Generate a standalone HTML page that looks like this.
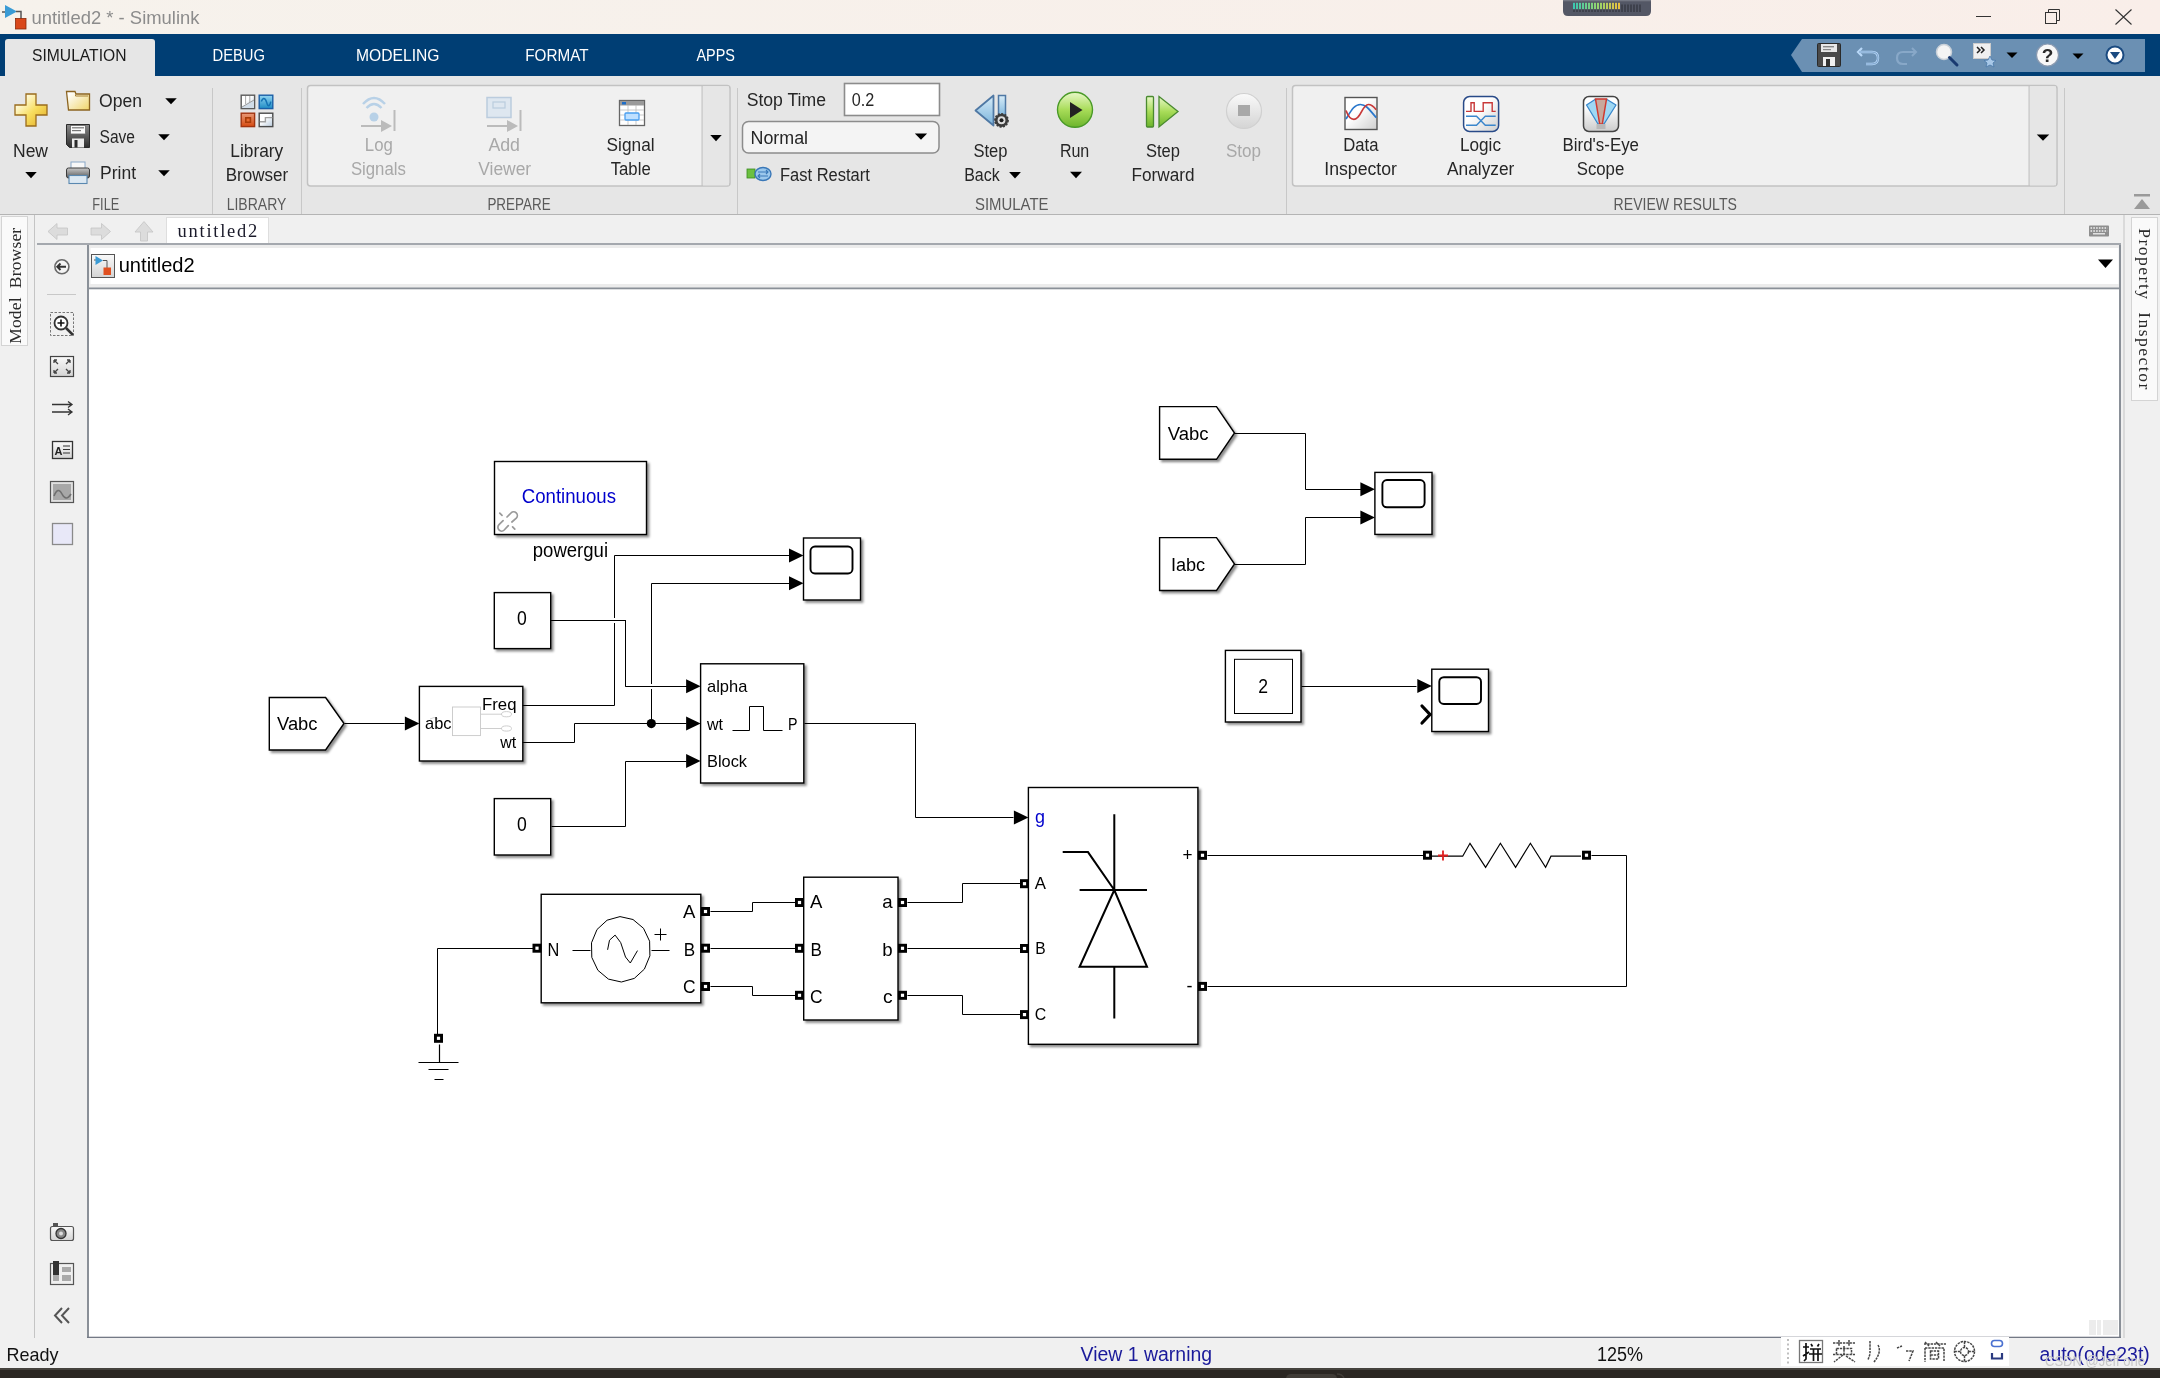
<!DOCTYPE html>
<html><head><meta charset="utf-8"><title>untitled2 * - Simulink</title>
<style>html,body{margin:0;padding:0;width:2160px;height:1378px;overflow:hidden;background:#fff;font-family:"Liberation Sans",sans-serif}svg{display:block;will-change:transform}</style>
</head><body>
<svg width="2160" height="1378" viewBox="0 0 2160 1378">
<defs><linearGradient id="tg" x1="0" y1="0" x2="1" y2="0"><stop offset="0" stop-color="#f6f2ec"/><stop offset="1" stop-color="#f9eee9"/></linearGradient></defs>
<rect x="0" y="0" width="2160" height="34" fill="url(#tg)"/>
<g><path d="M2 12H8" stroke="#555" stroke-width="1.5"/><path d="M5 5L17 11.5L5 18Z" fill="#3a9bd5"/><path d="M16 11.5H21V19" stroke="#555" stroke-width="1.5" fill="none"/><rect x="15.5" y="18.5" width="10.5" height="10.5" fill="#d9481b" stroke="#8a2a0a" stroke-width="0.8"/></g>
<text x="31.5" y="24" font-family="Liberation Sans" font-size="19" fill="#8c8c8c" textLength="168" lengthAdjust="spacingAndGlyphs">untitled2 * - Simulink</text>
<path d="M1563 0H1651V11Q1651 16 1646 16H1568Q1563 16 1563 11Z" fill="#535765"/><rect x="1563" y="0" width="88" height="1.3" fill="#737783"/>
<rect x="1573.0" y="2.8" width="2" height="6.4" fill="#3cc8b0"/>
<rect x="1573.0" y="9.6" width="2" height="2.4" fill="#3e414c"/>
<rect x="1576.0" y="2.8" width="2" height="6.4" fill="#47c9a7"/>
<rect x="1576.0" y="9.6" width="2" height="2.4" fill="#3e414c"/>
<rect x="1579.0" y="2.8" width="2" height="6.4" fill="#52cb9f"/>
<rect x="1579.0" y="9.6" width="2" height="2.4" fill="#3e414c"/>
<rect x="1582.0" y="2.8" width="2" height="6.4" fill="#5dcd97"/>
<rect x="1582.0" y="9.6" width="2" height="2.4" fill="#3e414c"/>
<rect x="1585.0" y="2.8" width="2" height="6.4" fill="#69cf8f"/>
<rect x="1585.0" y="9.6" width="2" height="2.4" fill="#3e414c"/>
<rect x="1588.0" y="2.8" width="2" height="6.4" fill="#74d086"/>
<rect x="1588.0" y="9.6" width="2" height="2.4" fill="#3e414c"/>
<rect x="1591.0" y="2.8" width="2" height="6.4" fill="#7fd27e"/>
<rect x="1591.0" y="9.6" width="2" height="2.4" fill="#3e414c"/>
<rect x="1594.0" y="2.8" width="2" height="6.4" fill="#8ad476"/>
<rect x="1594.0" y="9.6" width="2" height="2.4" fill="#3e414c"/>
<rect x="1597.0" y="2.8" width="2" height="6.4" fill="#96d66e"/>
<rect x="1597.0" y="9.6" width="2" height="2.4" fill="#3e414c"/>
<rect x="1600.0" y="2.8" width="2" height="6.4" fill="#a1d267"/>
<rect x="1600.0" y="9.6" width="2" height="2.4" fill="#3e414c"/>
<rect x="1603.0" y="2.8" width="2" height="6.4" fill="#adcf60"/>
<rect x="1603.0" y="9.6" width="2" height="2.4" fill="#3e414c"/>
<rect x="1606.0" y="2.8" width="2" height="6.4" fill="#b9cc5a"/>
<rect x="1606.0" y="9.6" width="2" height="2.4" fill="#3e414c"/>
<rect x="1609.0" y="2.8" width="2" height="6.4" fill="#c4c953"/>
<rect x="1609.0" y="9.6" width="2" height="2.4" fill="#3e414c"/>
<rect x="1612.0" y="2.8" width="2" height="6.4" fill="#d0c64d"/>
<rect x="1612.0" y="9.6" width="2" height="2.4" fill="#3e414c"/>
<rect x="1615.0" y="2.8" width="2" height="6.4" fill="#dcc346"/>
<rect x="1615.0" y="9.6" width="2" height="2.4" fill="#3e414c"/>
<rect x="1618.0" y="2.8" width="2" height="6.4" fill="#e8c040"/>
<rect x="1618.0" y="9.6" width="2" height="2.4" fill="#3e414c"/>
<rect x="1621.0" y="4.5" width="2" height="7.5" fill="#3e414c"/>
<rect x="1624.0" y="4.5" width="2" height="7.5" fill="#3e414c"/>
<rect x="1627.0" y="4.5" width="2" height="7.5" fill="#3e414c"/>
<rect x="1630.0" y="4.5" width="2" height="7.5" fill="#3e414c"/>
<rect x="1633.0" y="4.5" width="2" height="7.5" fill="#3e414c"/>
<rect x="1636.0" y="4.5" width="2" height="7.5" fill="#3e414c"/>
<rect x="1639.0" y="4.5" width="2" height="7.5" fill="#3e414c"/>
<path d="M1976 16.5H1991" stroke="#333" stroke-width="1" fill="none"/>
<rect x="2045.5" y="12.5" width="11" height="11" fill="none" stroke="#333" stroke-width="1"/><path d="M2048.5 12.5V9.5H2059.5V20.5H2056.5" fill="none" stroke="#333" stroke-width="1"/>
<path d="M2115.5 9.5L2131.5 24.5M2131.5 9.5L2115.5 24.5" stroke="#333" stroke-width="1.1" fill="none"/>
<rect x="0" y="34" width="2160" height="42" fill="#003e74"/>
<path d="M5 76V42Q5 39 8 39H152Q155 39 155 42V76Z" fill="#e6e6e6"/>
<text x="32" y="61.3" font-family="Liberation Sans" font-size="17" fill="#1a1a1a" textLength="94.5" lengthAdjust="spacingAndGlyphs">SIMULATION</text>
<text x="212.5" y="61.3" font-family="Liberation Sans" font-size="17" fill="#ffffff" textLength="52.5" lengthAdjust="spacingAndGlyphs">DEBUG</text>
<text x="356" y="61.3" font-family="Liberation Sans" font-size="17" fill="#ffffff" textLength="83.5" lengthAdjust="spacingAndGlyphs">MODELING</text>
<text x="525.3" y="61.3" font-family="Liberation Sans" font-size="17" fill="#ffffff" textLength="63.2" lengthAdjust="spacingAndGlyphs">FORMAT</text>
<text x="696.5" y="61.3" font-family="Liberation Sans" font-size="17" fill="#ffffff" textLength="38.5" lengthAdjust="spacingAndGlyphs">APPS</text>
<path d="M1791 55L1802 39H2145V72H1802Z" fill="#6b90b3"/>
<rect x="0" y="76" width="2160" height="138" fill="#e6e6e6"/>
<rect x="0" y="214" width="2160" height="1" fill="#b4b4b4"/>
<rect x="212.0" y="88" width="1" height="126" fill="#c8c8c8"/>
<rect x="301.0" y="88" width="1" height="126" fill="#c8c8c8"/>
<rect x="737.0" y="88" width="1" height="126" fill="#c8c8c8"/>
<rect x="1286.0" y="88" width="1" height="126" fill="#c8c8c8"/>
<rect x="2064.0" y="88" width="1" height="126" fill="#c8c8c8"/>
<defs><linearGradient id="gy" x1="0" y1="0" x2="0" y2="1"><stop offset="0" stop-color="#fff6b0"/><stop offset="0.5" stop-color="#f6d850"/><stop offset="1" stop-color="#e0a820"/></linearGradient><linearGradient id="gf" x1="0" y1="0" x2="1" y2="1"><stop offset="0" stop-color="#fffce8"/><stop offset="1" stop-color="#e8c878"/></linearGradient><linearGradient id="gg" x1="0" y1="0" x2="0" y2="1"><stop offset="0" stop-color="#e8f8c8"/><stop offset="0.5" stop-color="#a8dc58"/><stop offset="1" stop-color="#6cb42c"/></linearGradient><linearGradient id="gs" x1="0" y1="0" x2="0" y2="1"><stop offset="0" stop-color="#fafafa"/><stop offset="1" stop-color="#d4d4d4"/></linearGradient><linearGradient id="gb" x1="0" y1="0" x2="0" y2="1"><stop offset="0" stop-color="#d8ecf8"/><stop offset="1" stop-color="#7ab4dc"/></linearGradient><filter id="sh" x="-10%" y="-10%" width="130%" height="130%"><feDropShadow dx="2.2" dy="2.2" stdDeviation="1.3" flood-color="#000" flood-opacity="0.45"/></filter></defs>
<defs><linearGradient id="gy2" x1="0" y1="0" x2="1" y2="1"><stop offset="0.15" stop-color="#fffef0"/><stop offset="0.55" stop-color="#f8de60"/><stop offset="1" stop-color="#e0a820"/></linearGradient><linearGradient id="gfo" x1="0" y1="0" x2="1" y2="1"><stop offset="0.1" stop-color="#ffffff"/><stop offset="1" stop-color="#f0d468"/></linearGradient><linearGradient id="gfl" x1="0" y1="0" x2="0" y2="1"><stop offset="0" stop-color="#8a8a8a"/><stop offset="1" stop-color="#2e2e2e"/></linearGradient><linearGradient id="gpr" x1="0" y1="0" x2="0" y2="1"><stop offset="0" stop-color="#c8c8c8"/><stop offset="1" stop-color="#5a5a5a"/></linearGradient></defs>
<path d="M26 94H36V105H47V115H36V126H26V115H15V105H26Z" fill="url(#gy2)" stroke="#9a6c1c" stroke-width="1.3"/>
<text x="13" y="156.8" font-family="Liberation Sans" font-size="17.5" fill="#262626" textLength="35" lengthAdjust="spacingAndGlyphs">New</text>
<path d="M25.25 172L36.75 172L31 178.2Z" fill="#000"/>
<path d="M66.5 91.5H75L76 94H89.5V110H68.5Z" fill="url(#gfo)" stroke="#8c6420" stroke-width="1.3"/><path d="M75.5 94.5V96H88" stroke="#a88030" stroke-width="1" fill="none"/>
<text x="99" y="106.5" font-family="Liberation Sans" font-size="17.5" fill="#262626" textLength="43" lengthAdjust="spacingAndGlyphs">Open</text>
<path d="M165.25 98.2L176.75 98.2L171 104.2Z" fill="#000"/>
<path d="M66.5 124.5H89.5V147.5H69.5L66.5 144.5Z" fill="url(#gfl)" stroke="#2a2a2a" stroke-width="1"/><rect x="70.5" y="125.5" width="15" height="8.5" fill="#fafafa" stroke="#666" stroke-width="0.8"/><rect x="72" y="127.2" width="12" height="1.2" fill="#777"/><rect x="72" y="130" width="9" height="1.2" fill="#777"/><rect x="72" y="138.5" width="12" height="9" fill="#ececec"/><rect x="74.5" y="140" width="3" height="7.5" fill="#2a2a2a"/>
<text x="99.5" y="142.9" font-family="Liberation Sans" font-size="17.5" fill="#262626" textLength="35.5" lengthAdjust="spacingAndGlyphs">Save</text>
<path d="M158.25 134.2L169.75 134.2L164 140.2Z" fill="#000"/>
<rect x="71" y="162" width="14" height="7" fill="#f8f8f8" stroke="#8aa8c8" stroke-width="1"/><rect x="66.5" y="168" width="23" height="10" rx="2" fill="url(#gpr)" stroke="#3c3c3c" stroke-width="1"/><rect x="69" y="175.5" width="18" height="8" fill="#dce8f2" stroke="#5a88b0" stroke-width="1.1"/>
<text x="100" y="179" font-family="Liberation Sans" font-size="17.5" fill="#262626" textLength="36" lengthAdjust="spacingAndGlyphs">Print</text>
<path d="M158.25 170.3L169.75 170.3L164 176.3Z" fill="#000"/>
<text x="92.3" y="210" font-family="Liberation Sans" font-size="16.5" fill="#5a5a5a" textLength="27" lengthAdjust="spacingAndGlyphs">FILE</text>
<defs><linearGradient id="glb" x1="0" y1="0" x2="0" y2="1"><stop offset="0" stop-color="#90d4f2"/><stop offset="1" stop-color="#1f8cc4"/></linearGradient><linearGradient id="glo" x1="0" y1="0" x2="0" y2="1"><stop offset="0" stop-color="#e89a78"/><stop offset="1" stop-color="#d64a10"/></linearGradient><linearGradient id="glw" x1="0" y1="0" x2="1" y2="1"><stop offset="0.4" stop-color="#ffffff"/><stop offset="1" stop-color="#b8cadc"/></linearGradient></defs>
<rect x="241.2" y="95.2" width="13.4" height="13.4" fill="url(#glw)" stroke="#5a5a5a" stroke-width="1.4"/><path d="M242 107L254 100V108H242Z" fill="#d0dce8"/><path d="M242 107L254 100" stroke="#9a9a9a" stroke-width="1"/><path d="M245.6 96V104M249.8 96V102" stroke="#a8a8a8" stroke-width="1"/><rect x="259.2" y="95.2" width="13.6" height="13.4" fill="url(#glb)" stroke="#1a5ea6" stroke-width="1.4"/><path d="M261.3 101.6Q262.5 98.4 263.8 98.4Q265.5 98.4 266.5 102Q267.5 105.7 268.5 105.7Q270 105.7 270.8 101.6" stroke="#1472b4" stroke-width="1.5" fill="none"/><rect x="241.2" y="113.2" width="13.4" height="13.4" fill="url(#glo)" stroke="#a03410" stroke-width="1.4"/><rect x="245.8" y="117.8" width="4.6" height="4.4" fill="#e86a30" stroke="#a83c08" stroke-width="1.6"/><rect x="259.2" y="113.2" width="13.6" height="13.4" fill="url(#glw)" stroke="#4a4a4a" stroke-width="1.4"/><path d="M259.8 121.8H265.4V117.6H272.4" stroke="#a0a0a0" stroke-width="1.4" fill="none"/>
<text x="230.3" y="156.5" font-family="Liberation Sans" font-size="17.5" fill="#262626" textLength="53" lengthAdjust="spacingAndGlyphs">Library</text>
<text x="225.7" y="180.5" font-family="Liberation Sans" font-size="17.5" fill="#262626" textLength="62.5" lengthAdjust="spacingAndGlyphs">Browser</text>
<text x="226.7" y="210" font-family="Liberation Sans" font-size="16.5" fill="#5a5a5a" textLength="59.7" lengthAdjust="spacingAndGlyphs">LIBRARY</text>
<rect x="307.5" y="85.5" width="422.5" height="100.5" fill="#f0f0f0" stroke="#c2c2c2" stroke-width="1.5" rx="3"/>
<rect x="701.5" y="86" width="1.2" height="100" fill="#c2c2c2"/>
<rect x="703" y="86.3" width="26" height="99" fill="#e6e6e6"/>
<path d="M710.25 135L721.75 135L716 141.2Z" fill="#000"/>
<g opacity="0.55"><path d="M363 104Q374 92 385 104" stroke="#8cb8e0" stroke-width="2.5" fill="none"/><path d="M366.5 108Q374 100 381.5 108" stroke="#8cb8e0" stroke-width="2.5" fill="none"/><circle cx="374" cy="117" r="4.5" fill="#8cb8e0"/><path d="M361 126H382" stroke="#909090" stroke-width="2"/><path d="M381 120L392 126L381 132Z" fill="#909090"/><path d="M394.5 110V131" stroke="#909090" stroke-width="2"/></g>
<text x="364.8" y="151" font-family="Liberation Sans" font-size="17.5" fill="#a8a8a8" textLength="28" lengthAdjust="spacingAndGlyphs">Log</text>
<text x="350.9" y="175" font-family="Liberation Sans" font-size="17.5" fill="#a8a8a8" textLength="55" lengthAdjust="spacingAndGlyphs">Signals</text>
<g opacity="0.55"><rect x="487" y="97.5" width="24" height="20" fill="#d0e0f0" stroke="#90b0d0" stroke-width="1.5"/><rect x="493" y="102" width="12" height="6" fill="none" stroke="#90b0d0" stroke-width="1.2"/><path d="M487 126H508" stroke="#909090" stroke-width="2"/><path d="M507 120L518 126L507 132Z" fill="#909090"/><path d="M520.5 110V131" stroke="#909090" stroke-width="2"/></g>
<text x="488.4" y="151" font-family="Liberation Sans" font-size="17.5" fill="#a8a8a8" textLength="31.6" lengthAdjust="spacingAndGlyphs">Add</text>
<text x="478.2" y="175" font-family="Liberation Sans" font-size="17.5" fill="#a8a8a8" textLength="53" lengthAdjust="spacingAndGlyphs">Viewer</text>
<rect x="619.5" y="100.5" width="25" height="25" fill="#fff" stroke="#666" stroke-width="1.3"/><rect x="620" y="101" width="24" height="4.5" fill="#9a9a9a"/><rect x="622" y="102" width="4" height="2.5" fill="#1e6ec8"/><path d="M620 110H644M620 115H644M620 120H644M628 105V125M636 105V125" stroke="#bbb" stroke-width="0.8"/><rect x="625" y="113" width="14" height="7" rx="1" fill="#bfe0ff" stroke="#4a9ef0" stroke-width="1.3"/>
<text x="606.6" y="151" font-family="Liberation Sans" font-size="17.5" fill="#262626" textLength="48" lengthAdjust="spacingAndGlyphs">Signal</text>
<text x="610.7" y="175" font-family="Liberation Sans" font-size="17.5" fill="#262626" textLength="40" lengthAdjust="spacingAndGlyphs">Table</text>
<text x="487.4" y="209.5" font-family="Liberation Sans" font-size="16.5" fill="#5a5a5a" textLength="63.2" lengthAdjust="spacingAndGlyphs">PREPARE</text>
<text x="746.7" y="105.6" font-family="Liberation Sans" font-size="17.5" fill="#262626" textLength="79.3" lengthAdjust="spacingAndGlyphs">Stop Time</text>
<rect x="844.5" y="83.5" width="95" height="32" fill="#ffffff" stroke="#8c8c8c" stroke-width="1.6"/>
<text x="851.7" y="105.6" font-family="Liberation Sans" font-size="17.5" fill="#262626" textLength="22.5" lengthAdjust="spacingAndGlyphs">0.2</text>
<rect x="742.5" y="121.5" width="196.5" height="31.5" fill="#f4f4f4" stroke="#8c8c8c" stroke-width="1.5" rx="6"/>
<text x="750.5" y="143.7" font-family="Liberation Sans" font-size="17.5" fill="#262626" textLength="57.6" lengthAdjust="spacingAndGlyphs">Normal</text>
<path d="M914.85 133.5L927.15 133.5L921 139.7Z" fill="#000"/>
<rect x="747" y="169" width="8" height="9" fill="#6cc040" stroke="#3a8a20" stroke-width="0.8"/><ellipse cx="763" cy="174" rx="8" ry="6.5" fill="#9cc8ec" stroke="#3a78b8" stroke-width="1.4"/><path d="M758 172H768M766 170L768 172L766 174M768 176H758M760 174L758 176L760 178" stroke="#3a78b8" stroke-width="1.1" fill="none"/>
<text x="780" y="180.7" font-family="Liberation Sans" font-size="17.5" fill="#262626" textLength="89.8" lengthAdjust="spacingAndGlyphs">Fast Restart</text>
<path d="M975.5 110.5L993.5 95.5V125.5Z" fill="url(#gb)" stroke="#4f78a4" stroke-width="1.8" stroke-linejoin="round"/><rect x="998.5" y="95.5" width="7" height="22" fill="url(#gb)" stroke="#4f78a4" stroke-width="1.5"/><circle cx="1001.5" cy="120.3" r="6.6" fill="#3c3c3c" stroke="#3c3c3c" stroke-width="1.6" stroke-dasharray="2 1.4"/><circle cx="1001.5" cy="120.3" r="4.6" fill="#dcdcdc" stroke="#3c3c3c" stroke-width="1.3"/><circle cx="1001.5" cy="120.3" r="2" fill="#1e1e1e"/>
<text x="973.4" y="157" font-family="Liberation Sans" font-size="17.5" fill="#262626" textLength="34" lengthAdjust="spacingAndGlyphs">Step</text>
<text x="964.2" y="180.7" font-family="Liberation Sans" font-size="17.5" fill="#262626" textLength="35.5" lengthAdjust="spacingAndGlyphs">Back</text>
<path d="M1009.1 172L1020.9 172L1015 178.5Z" fill="#000"/>
<circle cx="1075" cy="109.8" r="17.5" fill="url(#gg)" stroke="#4a9a28" stroke-width="1.4"/><path d="M1070 102L1082.5 110L1070 118Z" fill="#222"/>
<text x="1059.9" y="156.9" font-family="Liberation Sans" font-size="17.5" fill="#262626" textLength="29.4" lengthAdjust="spacingAndGlyphs">Run</text>
<path d="M1070.0 171.7L1082.0 171.7L1076 178.29999999999998Z" fill="#000"/>
<rect x="1146.5" y="96.5" width="7" height="30.5" rx="1" fill="url(#gg)" stroke="#4a8a30" stroke-width="1.3"/><path d="M1159 96.5L1178 111.5L1159 127Z" fill="url(#gg)" stroke="#4a8a30" stroke-width="1.3"/>
<text x="1145.9" y="156.9" font-family="Liberation Sans" font-size="17.5" fill="#262626" textLength="34" lengthAdjust="spacingAndGlyphs">Step</text>
<text x="1131.5" y="180.7" font-family="Liberation Sans" font-size="17.5" fill="#262626" textLength="63" lengthAdjust="spacingAndGlyphs">Forward</text>
<circle cx="1244" cy="111" r="17.5" fill="url(#gs)" stroke="#d0d0d0" stroke-width="1.2"/><rect x="1238" y="105" width="12" height="11" fill="#a8a8a8"/>
<text x="1226" y="156.9" font-family="Liberation Sans" font-size="17.5" fill="#a8a8a8" textLength="35" lengthAdjust="spacingAndGlyphs">Stop</text>
<text x="975" y="209.8" font-family="Liberation Sans" font-size="16.5" fill="#5a5a5a" textLength="73.5" lengthAdjust="spacingAndGlyphs">SIMULATE</text>
<rect x="1292.5" y="85.5" width="764.5" height="100.5" fill="#f0f0f0" stroke="#c2c2c2" stroke-width="1.5" rx="3"/>
<rect x="2028.5" y="86" width="1.2" height="100" fill="#c2c2c2"/>
<rect x="2030" y="86.3" width="26" height="99" fill="#e6e6e6"/>
<path d="M2036.75 134.6L2049.25 134.6L2043 140.79999999999998Z" fill="#000"/>
<linearGradient id="gdi" x1="0" y1="0" x2="1" y2="1"><stop offset="0.4" stop-color="#ffffff"/><stop offset="1" stop-color="#cfcfcf"/></linearGradient>
<rect x="1345" y="97.5" width="32" height="32" fill="url(#gdi)" stroke="#555" stroke-width="1.4"/><path d="M1346 119C1351 111 1354 104.5 1360.4 104.5C1367 104.5 1371 112 1376.3 117.7" stroke="#2a78cc" stroke-width="1.7" fill="none"/><path d="M1346 110.5C1348 116 1350 119.4 1353.9 119.4C1361 119.4 1362 104.5 1368.4 104.5C1372 104.5 1374 107 1376.3 109.8" stroke="#c83838" stroke-width="1.7" fill="none"/>
<text x="1343.3" y="151" font-family="Liberation Sans" font-size="17.5" fill="#262626" textLength="35.2" lengthAdjust="spacingAndGlyphs">Data</text>
<text x="1324.3" y="175.1" font-family="Liberation Sans" font-size="17.5" fill="#262626" textLength="72.7" lengthAdjust="spacingAndGlyphs">Inspector</text>
<rect x="1463.6" y="96.6" width="35" height="34.8" rx="6" fill="url(#gdi)" stroke="#284a88" stroke-width="1.5"/><path d="M1466 111.4H1471V102.7H1474.2V111.4H1483.2V102.7H1492.2V111.4H1495.7" stroke="#c83838" stroke-width="1.4" fill="none"/><path d="M1466 116.2H1476.5L1485.3 125.2H1495.7M1466 125.2H1476.5L1485.3 116.2H1495.7" stroke="#3a86cc" stroke-width="1.4" fill="none"/>
<text x="1460" y="151" font-family="Liberation Sans" font-size="17.5" fill="#262626" textLength="41" lengthAdjust="spacingAndGlyphs">Logic</text>
<text x="1447" y="175.1" font-family="Liberation Sans" font-size="17.5" fill="#262626" textLength="67.4" lengthAdjust="spacingAndGlyphs">Analyzer</text>
<linearGradient id="gbe" x1="0" y1="0" x2="0" y2="1"><stop offset="0.3" stop-color="#ffffff"/><stop offset="1" stop-color="#cccccc"/></linearGradient>
<rect x="1583.5" y="96.5" width="35" height="35" rx="5.5" fill="url(#gbe)" stroke="#444" stroke-width="1.5"/><path d="M1586.5 105L1595 99.5H1607L1616 105L1604 124H1598Z" fill="#9fd8f4" stroke="#3a88cc" stroke-width="1.3" stroke-linejoin="round"/><path d="M1595.5 99H1606.5L1602.3 124H1599.7Z" fill="#c8a89c" stroke="#d03a30" stroke-width="1.5"/><rect x="1596.5" y="124" width="9" height="5" fill="#b8b8b8"/>
<text x="1562.6" y="151" font-family="Liberation Sans" font-size="17.5" fill="#262626" textLength="76.4" lengthAdjust="spacingAndGlyphs">Bird's-Eye</text>
<text x="1576.7" y="175.1" font-family="Liberation Sans" font-size="17.5" fill="#262626" textLength="47.6" lengthAdjust="spacingAndGlyphs">Scope</text>
<text x="1613.6" y="210" font-family="Liberation Sans" font-size="16.5" fill="#5a5a5a" textLength="123.3" lengthAdjust="spacingAndGlyphs">REVIEW RESULTS</text>
<rect x="2134" y="194" width="16" height="2.5" fill="#9a9a9a"/><path d="M2134 209L2142 199L2150 209Z" fill="#9a9a9a"/>
<rect x="1817.5" y="43.5" width="23" height="23" rx="1" fill="#4a4a4a" stroke="#2a2a2a" stroke-width="1"/><rect x="1821" y="44" width="16" height="8" fill="#e8e8e8"/><rect x="1823" y="46" width="11" height="1.4" fill="#888"/><rect x="1823" y="49" width="8" height="1.2" fill="#888"/><rect x="1823" y="57" width="12" height="9" fill="#f0f0f0"/><rect x="1826" y="59" width="4" height="7" fill="#333"/>
<path d="M1862 48L1858 52L1862 56" stroke="#b8d8f8" stroke-width="2.2" fill="none"/><path d="M1859 52H1872Q1878 52 1878 58Q1878 64 1872 64H1866" stroke="#b8d8f8" stroke-width="2.4" fill="none"/><path d="M1859 52H1872Q1878 52 1878 58Q1878 64 1872 64H1866" stroke="#2a5a90" stroke-width="0.8" fill="none" opacity="0.6"/>
<path d="M1912 48L1916 52L1912 56" stroke="#88a8c8" stroke-width="2" fill="none"/><path d="M1915 52H1903Q1897 52 1897 58Q1897 64 1903 64H1907" stroke="#88a8c8" stroke-width="2.2" fill="none"/>
<circle cx="1944" cy="52" r="7.5" fill="#f4f4f4" stroke="#c8d0d8" stroke-width="1.5"/><path d="M1949.5 57.5L1957 65" stroke="#1a3a70" stroke-width="3" stroke-linecap="round"/>
<rect x="1973.5" y="43.5" width="17" height="15" fill="#f0f0f0" stroke="#ccc" stroke-width="1"/><path d="M1977 47L1980 50L1977 53M1981 47L1984 50L1981 53" stroke="#222" stroke-width="1.5" fill="none"/><path d="M1990 56L1992 60L1996 60.5L1993 63L1994 67L1990 65L1986 67L1987 63L1984 60.5L1988 60Z" fill="#a8c8e8" stroke="#4a78a8" stroke-width="0.8"/>
<path d="M2006.5 52.5L2017.5 52.5L2012 58.0Z" fill="#000"/>
<circle cx="2047.5" cy="55" r="11" fill="#f8f8f8" stroke="#8a9ab0" stroke-width="1.2"/><text x="2047.5" y="62" font-family="Liberation Sans" font-weight="bold" font-size="19" text-anchor="middle" fill="#2a2a2a">?</text>
<path d="M2072.5 53.5L2083.5 53.5L2078 59.0Z" fill="#000"/>
<circle cx="2115" cy="55" r="8.5" fill="#ffffff" stroke="#1a4a80" stroke-width="2"/><path d="M2110 52H2120L2115 59Z" fill="#1a4a80"/>
<rect x="0" y="215" width="2160" height="1123" fill="#f0f0f0"/>
<rect x="1.5" y="216.5" width="26" height="129" fill="#fafafa" stroke="#d4d4d4" stroke-width="1"/>
<text transform="translate(20.9 343.8) rotate(-90)" xml:space="preserve" style="white-space:pre" font-family="Liberation Serif" font-size="17.5" fill="#2a2a2a" textLength="116" lengthAdjust="spacing">Model  Browser</text>
<rect x="34" y="215" width="1" height="1123" fill="#c4c4c4"/>
<path d="M48 231.5L57 223.5V228H67.5V235H57V239.5Z" fill="#dcdcdc" stroke="#c4c4c4" stroke-width="0.8"/>
<path d="M110.5 231.5L101.5 223.5V228H91V235H101.5V239.5Z" fill="#dcdcdc" stroke="#c4c4c4" stroke-width="0.8"/>
<path d="M144 221.5L153 232H147.5V241H140.5V232H135Z" fill="#dcdcdc" stroke="#c4c4c4" stroke-width="0.8"/>
<rect x="166.5" y="217.5" width="102" height="26" fill="#ffffff" stroke="#dedede" stroke-width="1"/>
<text x="177.6" y="237.1" font-family="Liberation Serif" font-size="18.5" fill="#1a1a2a" textLength="79.6" lengthAdjust="spacing">untitled2</text>
<rect x="37" y="243" width="2084" height="2" fill="#a4a8ae"/>
<rect x="2089" y="225.5" width="20" height="11" rx="0.8" fill="#8e8e8e"/><path d="M2090.5 228H2107.5M2090.5 231H2107.5" stroke="#f0f0f0" stroke-width="1.3" stroke-dasharray="1.6 1.2"/><path d="M2093 233.8H2105" stroke="#f0f0f0" stroke-width="1.3"/>
<rect x="87" y="245" width="2034" height="45" fill="#ececec"/>
<rect x="90.5" y="248" width="2028" height="36" fill="#ffffff"/>
<rect x="87" y="245" width="2" height="1093" fill="#8a9098"/>
<rect x="87" y="287.5" width="2034" height="2" fill="#8a9098"/>
<rect x="2119" y="245" width="2" height="1093" fill="#8a9098"/>
<rect x="91.5" y="254.5" width="23" height="23" fill="url(#gs)" stroke="#555" stroke-width="1"/><path d="M94 260H96" stroke="#555" stroke-width="1"/><path d="M95.5 256L103 260.5L95.5 265Z" fill="#3a9bd5"/><path d="M103 260.5H107V268" stroke="#555" stroke-width="1" fill="none"/><rect x="103.5" y="267.5" width="7.5" height="7.5" fill="#e05020"/>
<text x="118.7" y="271.8" font-family="Liberation Sans" font-size="19.5" fill="#000" textLength="76" lengthAdjust="spacingAndGlyphs">untitled2</text>
<path d="M2098.0 259.5L2113.0 259.5L2105.5 268.0Z" fill="#000"/>
<rect x="89" y="289.5" width="2030" height="1047.5" fill="#ffffff"/>
<rect x="87" y="1336.7" width="2034" height="1.4" fill="#737985"/>
<rect x="2131.5" y="217.5" width="26" height="183" fill="#fafafa" stroke="#d4d4d4" stroke-width="1"/>
<text transform="translate(2139.3 228.3) rotate(90)" xml:space="preserve" style="white-space:pre" font-family="Liberation Serif" font-size="17.5" fill="#2a2a2a" textLength="161" lengthAdjust="spacing">Property  Inspector</text>
<rect x="2123.5" y="215" width="1" height="1123" fill="#c4c4c4"/>
<circle cx="61.9" cy="266.8" r="7" fill="#f4f4f4" stroke="#6a6a6a" stroke-width="1.6"/><path d="M57.5 266.8H66M60.5 263.5L57.3 266.8L60.5 270" stroke="#333" stroke-width="2" fill="none"/>
<rect x="47" y="294" width="29" height="1" fill="#c8c8c8"/>
<rect x="50.5" y="312.5" width="23" height="23" fill="none" stroke="#777" stroke-width="1" stroke-dasharray="2.5 1.5"/><circle cx="61" cy="323" r="6.5" fill="#fff" stroke="#333" stroke-width="1.8"/><path d="M61 319.5V326.5M57.5 323H64.5" stroke="#111" stroke-width="1.6"/><path d="M66 328L73 335" stroke="#333" stroke-width="2.5"/>
<rect x="50.5" y="356.5" width="23" height="20" fill="url(#gs)" stroke="#444" stroke-width="1.2"/><path d="M54 360L58 364M54 360H57M54 360V363M70 360L66 364M70 360H67M70 360V363M54 373L58 369M54 373H57M54 373V370M70 373L66 369M70 373H67M70 373V370" stroke="#444" stroke-width="1.3" fill="none"/>
<path d="M52 404.5H72M52 412H72M68 401.5L72 404.5L68 407.5M68 409L72 412L68 415" stroke="#333" stroke-width="1.3" fill="none"/>
<rect x="52.5" y="441.5" width="20" height="17" fill="url(#gs)" stroke="#333" stroke-width="1.3"/><text x="54.5" y="455" font-family="Liberation Sans" font-weight="bold" font-size="11" fill="#222">A</text><path d="M63 446H70M63 449.5H70M63 453H70" stroke="#333" stroke-width="1.2"/>
<rect x="50.5" y="481.5" width="23" height="21" fill="#e0e0e0" stroke="#555" stroke-width="1.2"/><rect x="53" y="484" width="18" height="16" fill="#a8a8a8"/><path d="M54 496Q58 486 62 494T71 494" stroke="#707070" stroke-width="1.6" fill="none"/>
<rect x="52.5" y="523.5" width="20" height="21" fill="#e8e8f8" stroke="#8a8a8a" stroke-width="1.3"/>
<rect x="50.5" y="1226.5" width="23" height="14" rx="2" fill="url(#gs)" stroke="#555" stroke-width="1.2"/><rect x="53" y="1223" width="5" height="3.5" fill="#555"/><circle cx="61" cy="1233.5" r="5" fill="#888" stroke="#333" stroke-width="1.3"/><circle cx="61" cy="1233.5" r="2" fill="#ddd"/>
<rect x="50.5" y="1263.5" width="23" height="21" fill="#f0f0f0" stroke="#555" stroke-width="1.2"/><rect x="53" y="1261" width="6" height="14" fill="#333"/><rect x="62" y="1267" width="9" height="5" fill="#aaa"/><rect x="62" y="1275" width="9" height="6" fill="#aaa"/><rect x="53" y="1275" width="6" height="6" fill="#aaa"/>
<path d="M62 1308L55 1315.5L62 1323M69 1308L62 1315.5L69 1323" stroke="#555" stroke-width="2" fill="none"/>
<rect x="0" y="1338" width="2160" height="30" fill="#f0f0f0"/>
<text x="6.5" y="1361" font-family="Liberation Sans" font-size="19" fill="#111" textLength="52" lengthAdjust="spacingAndGlyphs">Ready</text>
<text x="1080.6" y="1361" font-family="Liberation Sans" font-size="19.5" fill="#1a1a9a" textLength="131.5" lengthAdjust="spacingAndGlyphs">View 1 warning</text>
<text x="1597" y="1361" font-family="Liberation Sans" font-size="19.5" fill="#111" textLength="46" lengthAdjust="spacingAndGlyphs">125%</text>
<text x="2039.6" y="1361" font-family="Liberation Sans" font-size="19.5" fill="#1a1a9a" textLength="110.2" lengthAdjust="spacingAndGlyphs">auto(ode23t)</text>
<rect x="1781" y="1337" width="228" height="29" fill="#ffffff"/>
<path d="M1788 1339V1366" stroke="#aaa" stroke-width="1.5" stroke-dasharray="2 2.5"/>
<rect x="1799.5" y="1340.5" width="23" height="22" fill="none" stroke="#777" stroke-width="1.3"/>
<g stroke="#111" stroke-width="1.7" fill="none"><path d="M1803 1347H1809M1806 1343V1359L1804 1361M1803 1356L1809 1352M1811 1344L1812.5 1346.5M1819 1344L1817.5 1346.5M1810 1349H1821M1809 1354H1822M1813.5 1349V1361M1818 1349V1361"/></g>
<g stroke="#333" stroke-width="1.5" fill="none" stroke-dasharray="2.4 0.9" opacity="0.9"><path d="M1833 1343H1855M1839 1340V1346M1849 1340V1346M1836.5 1348.5H1851.5V1354M1836.5 1348.5V1354M1844 1346V1356M1833 1354.5H1855M1843 1355L1834 1362M1846 1356L1855 1362"/><path d="M1870 1341V1354L1868 1360M1878 1345Q1882 1352 1874 1362"/><path d="M1897 1348L1902 1346M1906 1351H1913L1909 1361"/><path d="M1925 1342L1929 1346M1936 1342L1940 1346M1924 1344H1946M1925 1348V1362M1925 1348H1944V1362M1930.5 1351V1359H1938.5V1351ZM1930.5 1355H1938.5"/><circle cx="1964.5" cy="1351.5" r="10"/><circle cx="1964.5" cy="1351.5" r="4"/><path d="M1964.5 1341.5V1347.5M1964.5 1355.5V1361.5M1954.5 1351.5H1960.5M1968.5 1351.5H1974.5"/></g>
<rect x="1991.5" y="1340.5" width="11" height="6" rx="3" fill="none" stroke="#4a70d0" stroke-width="1.6"/><path d="M1992 1353V1358.5H2002V1353" stroke="#2a3a80" stroke-width="2.2" fill="none"/>
<rect x="2089" y="1320" width="7" height="15" fill="#ececec"/>
<rect x="2097" y="1320" width="4" height="15" fill="#ececec"/>
<rect x="2103" y="1320" width="15" height="15" fill="#ececec"/>
<text x="2045" y="1366" font-family="Liberation Sans" font-size="15" fill="#c8c8c8" textLength="100" lengthAdjust="spacingAndGlyphs">CSDN @Jeff one</text>
<rect x="0" y="1368" width="2160" height="10" fill="#2b2723"/>
<rect x="0" y="1368" width="2160" height="2" fill="#45423d"/>
<path d="M1286 1378V1378Q1287 1374 1291 1374H1332Q1336 1374 1337 1378Z" fill="#403c37"/><path d="M1337 1374Q1342 1374 1344 1378" stroke="#403c37" stroke-width="1.5" fill="none"/>
<rect x="494.5" y="461.5" width="152" height="73" fill="#fff" stroke="#000" stroke-width="1.4" filter="url(#sh)"/>
<text x="521.8" y="503.1" font-family="Liberation Sans" font-size="19.6" fill="#0000cc" textLength="94.2" lengthAdjust="spacingAndGlyphs">Continuous</text>
<g stroke="#9a9a9a" stroke-width="1.7" fill="none" stroke-linecap="round"><path d="M507 517L511 513A3.7 3.7 0 0 1 516.3 518.2L511.9 522"/><path d="M503.1 520.6L499 524.7A3.7 3.7 0 0 0 504.2 530L508.3 525.7"/><path d="M499.8 513.2L502 515.4M512.6 526.8L514.8 529.1"/></g>
<text x="532.8" y="557" font-family="Liberation Sans" font-size="19.3" fill="#000" textLength="75.2" lengthAdjust="spacingAndGlyphs">powergui</text>
<rect x="803.5" y="538" width="57" height="62" fill="#fff" stroke="#000" stroke-width="1.4" filter="url(#sh)"/>
<rect x="810.5" y="546.5" width="42.0" height="27.0" rx="4.5" fill="none" stroke="#000" stroke-width="1.9"/>
<rect x="494.3" y="592.6" width="56.4" height="56" fill="#fff" stroke="#000" stroke-width="1.4" filter="url(#sh)"/>
<text x="517" y="625" font-family="Liberation Sans" font-size="19.6" fill="#000" textLength="9.8" lengthAdjust="spacingAndGlyphs">0</text>
<rect x="494.3" y="798.6" width="56.4" height="56.4" fill="#fff" stroke="#000" stroke-width="1.4" filter="url(#sh)"/>
<text x="517" y="831.2" font-family="Liberation Sans" font-size="19.6" fill="#000" textLength="9.8" lengthAdjust="spacingAndGlyphs">0</text>
<path d="M269.3 697.5H325.6L344 723.5L325.6 750H269.3Z" fill="#fff" stroke="#000" stroke-width="1.4" filter="url(#sh)"/>
<text x="277" y="730" font-family="Liberation Sans" font-size="19.2" fill="#000" textLength="40.5" lengthAdjust="spacingAndGlyphs">Vabc</text>
<rect x="419.4" y="686.4" width="103.4" height="74.6" fill="#fff" stroke="#000" stroke-width="1.4" filter="url(#sh)"/>
<rect x="452.5" y="707" width="28" height="28.6" fill="none" stroke="#c8c8c8" stroke-width="0.9"/><path d="M480.8 714.2H502M480.8 728.5H502" stroke="#c8c8c8" stroke-width="0.9"/><ellipse cx="506.5" cy="714.2" rx="5" ry="2.6" fill="none" stroke="#c8c8c8" stroke-width="0.9"/><ellipse cx="506.5" cy="728.5" rx="5" ry="2.6" fill="none" stroke="#c8c8c8" stroke-width="0.9"/><path d="M430 719Q434 716 438 719" stroke="#d0d0d0" stroke-width="0.9" fill="none"/>
<text x="425" y="729" font-family="Liberation Sans" font-size="17" fill="#000" textLength="26.5" lengthAdjust="spacingAndGlyphs">abc</text>
<text x="482" y="709.7" font-family="Liberation Sans" font-size="17" fill="#000" textLength="34.5" lengthAdjust="spacingAndGlyphs">Freq</text>
<text x="500.2" y="747.6" font-family="Liberation Sans" font-size="17" fill="#000" textLength="16" lengthAdjust="spacingAndGlyphs">wt</text>
<rect x="700.6" y="663.8" width="103.2" height="119.2" fill="#fff" stroke="#000" stroke-width="1.4" filter="url(#sh)"/>
<text x="707" y="692" font-family="Liberation Sans" font-size="17" fill="#000" textLength="40.3" lengthAdjust="spacingAndGlyphs">alpha</text>
<text x="707" y="729.6" font-family="Liberation Sans" font-size="17" fill="#000" textLength="16" lengthAdjust="spacingAndGlyphs">wt</text>
<text x="707" y="767" font-family="Liberation Sans" font-size="17" fill="#000" textLength="40" lengthAdjust="spacingAndGlyphs">Block</text>
<text x="788" y="729.6" font-family="Liberation Sans" font-size="17" fill="#000" textLength="9.5" lengthAdjust="spacingAndGlyphs">P</text>
<path d="M732.5 730.5H749.5V706.5H763.5V730.5H782.5" stroke="#000" stroke-width="1.0" fill="none"/>
<path d="M1159.6 406.6H1216.5L1234.5 433L1216.5 459.3H1159.6Z" fill="#fff" stroke="#000" stroke-width="1.4" filter="url(#sh)"/>
<text x="1167.7" y="439.7" font-family="Liberation Sans" font-size="19.2" fill="#000" textLength="40.8" lengthAdjust="spacingAndGlyphs">Vabc</text>
<path d="M1159.6 537.6H1216.5L1234.5 564L1216.5 590.5H1159.6Z" fill="#fff" stroke="#000" stroke-width="1.4" filter="url(#sh)"/>
<text x="1170.9" y="571.2" font-family="Liberation Sans" font-size="19.2" fill="#000" textLength="34.3" lengthAdjust="spacingAndGlyphs">Iabc</text>
<rect x="1374.9" y="472.4" width="57.1" height="62" fill="#fff" stroke="#000" stroke-width="1.4" filter="url(#sh)"/>
<rect x="1382.4" y="480" width="42.19999999999982" height="27.30000000000001" rx="4.5" fill="none" stroke="#000" stroke-width="1.9"/>
<rect x="1225.4" y="650.4" width="75.6" height="71.6" fill="#fff" stroke="#000" stroke-width="1.4" filter="url(#sh)"/>
<rect x="1234.5" y="659.3" width="58" height="54.2" fill="none" stroke="#000" stroke-width="1"/>
<text x="1258.3" y="692.8" font-family="Liberation Sans" font-size="19.6" fill="#000" textLength="9.8" lengthAdjust="spacingAndGlyphs">2</text>
<rect x="1431.8" y="669.2" width="56.7" height="62.3" fill="#fff" stroke="#000" stroke-width="1.4" filter="url(#sh)"/>
<rect x="1439.3" y="677.2" width="41.700000000000045" height="26.799999999999955" rx="4.5" fill="none" stroke="#000" stroke-width="1.9"/>
<path d="M1422 706L1430 714.5L1422 723" stroke="#000" stroke-width="3.2" fill="none" stroke-linecap="round"/>
<rect x="541.2" y="894.3" width="159.6" height="108.5" fill="#fff" stroke="#000" stroke-width="1.4" filter="url(#sh)"/>
<text x="547.6" y="956" font-family="Liberation Sans" font-size="18.5" fill="#000" textLength="11.8" lengthAdjust="spacingAndGlyphs">N</text>
<text x="683" y="917.6" font-family="Liberation Sans" font-size="18.5" fill="#000" textLength="12.4" lengthAdjust="spacingAndGlyphs">A</text>
<text x="683.8" y="956" font-family="Liberation Sans" font-size="18.5" fill="#000" textLength="11.4" lengthAdjust="spacingAndGlyphs">B</text>
<text x="683" y="992.6" font-family="Liberation Sans" font-size="18.5" fill="#000" textLength="12.6" lengthAdjust="spacingAndGlyphs">C</text>
<polygon points="649.9,955.8 644.4,969.1 634.3,978.4 621.4,982.0 608.4,979.1 597.9,970.3 591.8,957.4 591.5,942.8 597.0,929.5 607.1,920.2 620.0,916.6 633.0,919.5 643.5,928.3 649.6,941.2" fill="none" stroke="#000" stroke-width="1"/>
<path d="M572.5 950.5H590.5M651.5 950.5H669.5" stroke="#000" stroke-width="1" fill="none"/>
<path d="M654.5 934.5H666.5M660.5 928.5V940.5" stroke="#000" stroke-width="1" fill="none"/>
<path d="M607.6 949.8L609.5 940.2L615.1 935.1L620.7 942.6L625.5 957L630.3 963L637.5 950.6" stroke="#000" stroke-width="1" fill="none"/>
<rect x="532.5" y="943.7" width="9" height="9" fill="#000"/><rect x="535.4" y="946.6" width="3.2" height="3.2" fill="#fff"/>
<rect x="701.0" y="907.0" width="9" height="9" fill="#000"/><rect x="703.9" y="909.9" width="3.2" height="3.2" fill="#fff"/>
<rect x="701.0" y="943.7" width="9" height="9" fill="#000"/><rect x="703.9" y="946.6" width="3.2" height="3.2" fill="#fff"/>
<rect x="701.0" y="982.0" width="9" height="9" fill="#000"/><rect x="703.9" y="984.9" width="3.2" height="3.2" fill="#fff"/>
<rect x="434.0" y="1033.8" width="9" height="9" fill="#000"/><rect x="436.9" y="1036.7" width="3.2" height="3.2" fill="#fff"/>
<path d="M439.5 1044.5V1062.5M418.5 1062.5H458.5M428.5 1069.5H448.5M434.5 1079.5H443.5" stroke="#000" stroke-width="1.2" fill="none"/>
<rect x="803.7" y="877.2" width="94.3" height="142.8" fill="#fff" stroke="#000" stroke-width="1.4" filter="url(#sh)"/>
<text x="810" y="908.3" font-family="Liberation Sans" font-size="18.5" fill="#000" textLength="12.4" lengthAdjust="spacingAndGlyphs">A</text>
<text x="810.5" y="955.5" font-family="Liberation Sans" font-size="18.5" fill="#000" textLength="11.4" lengthAdjust="spacingAndGlyphs">B</text>
<text x="810" y="1002.5" font-family="Liberation Sans" font-size="18.5" fill="#000" textLength="12.6" lengthAdjust="spacingAndGlyphs">C</text>
<text x="882.3" y="908.3" font-family="Liberation Sans" font-size="18.5" fill="#000" textLength="10.4" lengthAdjust="spacingAndGlyphs">a</text>
<text x="882.3" y="955.5" font-family="Liberation Sans" font-size="18.5" fill="#000" textLength="10.4" lengthAdjust="spacingAndGlyphs">b</text>
<text x="883" y="1002.5" font-family="Liberation Sans" font-size="18.5" fill="#000" textLength="9.6" lengthAdjust="spacingAndGlyphs">c</text>
<rect x="795.0" y="898.0" width="9" height="9" fill="#000"/><rect x="797.9" y="900.9" width="3.2" height="3.2" fill="#fff"/>
<rect x="898.0" y="898.0" width="9" height="9" fill="#000"/><rect x="900.9" y="900.9" width="3.2" height="3.2" fill="#fff"/>
<rect x="795.0" y="943.8" width="9" height="9" fill="#000"/><rect x="797.9" y="946.6999999999999" width="3.2" height="3.2" fill="#fff"/>
<rect x="898.0" y="943.8" width="9" height="9" fill="#000"/><rect x="900.9" y="946.6999999999999" width="3.2" height="3.2" fill="#fff"/>
<rect x="795.0" y="990.8" width="9" height="9" fill="#000"/><rect x="797.9" y="993.6999999999999" width="3.2" height="3.2" fill="#fff"/>
<rect x="898.0" y="990.8" width="9" height="9" fill="#000"/><rect x="900.9" y="993.6999999999999" width="3.2" height="3.2" fill="#fff"/>
<rect x="1028.4" y="787.5" width="169.5" height="256.8" fill="#fff" stroke="#000" stroke-width="1.4" filter="url(#sh)"/>
<text x="1035" y="823" font-family="Liberation Sans" font-size="18.5" fill="#0000cc" textLength="10" lengthAdjust="spacingAndGlyphs">g</text>
<text x="1034.8" y="888.7" font-family="Liberation Sans" font-size="17" fill="#000" textLength="11.2" lengthAdjust="spacingAndGlyphs">A</text>
<text x="1035.3" y="954.4" font-family="Liberation Sans" font-size="17" fill="#000" textLength="10.4" lengthAdjust="spacingAndGlyphs">B</text>
<text x="1034.8" y="1020.3" font-family="Liberation Sans" font-size="17" fill="#000" textLength="11.5" lengthAdjust="spacingAndGlyphs">C</text>
<text x="1182.5" y="861" font-family="Liberation Sans" font-size="18.5" fill="#000" textLength="10" lengthAdjust="spacingAndGlyphs">+</text>
<text x="1186.5" y="992" font-family="Liberation Sans" font-size="18.5" fill="#000" textLength="6" lengthAdjust="spacingAndGlyphs">-</text>
<path d="M1114.3 814.2V890M1114.3 966.8V1018.4M1079.6 890H1147M1114.3 890L1079.6 966.8H1147Z M1062.7 852.1H1088L1114.3 890" stroke="#000" stroke-width="2" fill="none"/>
<rect x="1020.0" y="879.2" width="9" height="9" fill="#000"/><rect x="1022.9" y="882.1" width="3.2" height="3.2" fill="#fff"/>
<rect x="1020.0" y="944.0" width="9" height="9" fill="#000"/><rect x="1022.9" y="946.9" width="3.2" height="3.2" fill="#fff"/>
<rect x="1020.0" y="1010.1" width="9" height="9" fill="#000"/><rect x="1022.9" y="1013.0" width="3.2" height="3.2" fill="#fff"/>
<rect x="1198.0" y="850.8" width="9" height="9" fill="#000"/><rect x="1200.9" y="853.6999999999999" width="3.2" height="3.2" fill="#fff"/>
<rect x="1198.0" y="981.9" width="9" height="9" fill="#000"/><rect x="1200.9" y="984.8" width="3.2" height="3.2" fill="#fff"/>
<rect x="1423.0" y="850.7" width="9" height="9" fill="#000"/><rect x="1425.9" y="853.6" width="3.2" height="3.2" fill="#fff"/>
<rect x="1582.0" y="850.7" width="9" height="9" fill="#000"/><rect x="1584.9" y="853.6" width="3.2" height="3.2" fill="#fff"/>
<path d="M1432 856.2H1462.7L1470 843.3L1485.6 867.3L1500.4 843.3L1515.6 867.3L1530.4 843.3L1545.6 867.3L1551 856.2H1581" stroke="#000" stroke-width="1.2" fill="none"/>
<path d="M1438 855.5H1448M1443 850.5V860.5" stroke="#e02020" stroke-width="1.8"/>
<path d="M344.5 723.5H404.5" stroke="#000" stroke-width="1.0" fill="none"/>
<path d="M404.9 716.5L419.4 723.5L404.9 730.5Z" fill="#000"/>
<path d="M522.5 705.5H614.5V555.5H789.5" stroke="#000" stroke-width="1.0" fill="none"/>
<path d="M789.0 548.6L803.5 555.6L789.0 562.6Z" fill="#000"/>
<path d="M522.5 742.5H574.5V723.5H686.5" stroke="#000" stroke-width="1.0" fill="none"/>
<path d="M686.1 716.6L700.6 723.6L686.1 730.6Z" fill="#000"/>
<circle cx="651.3" cy="723.6" r="4.6" fill="#000"/>
<path d="M651.5 723.5V583.5H789.5" stroke="#000" stroke-width="1.0" fill="none"/>
<path d="M789.0 576.3L803.5 583.3L789.0 590.3Z" fill="#000"/>
<path d="M551.5 620.5H625.5V686.5H686.5" stroke="#000" stroke-width="1.0" fill="none"/>
<path d="M686.1 679.2L700.6 686.2L686.1 693.2Z" fill="#000"/>
<path d="M551.5 826.5H625.5V761.5H686.5" stroke="#000" stroke-width="1.0" fill="none"/>
<path d="M686.1 754.0L700.6 761L686.1 768.0Z" fill="#000"/>
<path d="M804.5 723.5H915.5V817.5H1013.5" stroke="#000" stroke-width="1.0" fill="none"/>
<path d="M1013.9000000000001 810.4L1028.4 817.4L1013.9000000000001 824.4Z" fill="#000"/>
<path d="M1234.5 433.5H1305.5V489.5H1361.5" stroke="#000" stroke-width="1.0" fill="none"/>
<path d="M1360.4 482.3L1374.9 489.3L1360.4 496.3Z" fill="#000"/>
<path d="M1234.5 564.5H1305.5V517.5H1361.5" stroke="#000" stroke-width="1.0" fill="none"/>
<path d="M1360.4 510.5L1374.9 517.5L1360.4 524.5Z" fill="#000"/>
<path d="M1301.5 686.5H1416.5" stroke="#000" stroke-width="1.0" fill="none"/>
<path d="M1417.3 679.1L1431.8 686.1L1417.3 693.1Z" fill="#000"/>
<path d="M710.5 911.5H752.5V902.5H795.5" stroke="#000" stroke-width="1.0" fill="none"/>
<path d="M710.5 948.5H795.5" stroke="#000" stroke-width="1.0" fill="none"/>
<path d="M710.5 986.5H752.5V995.5H795.5" stroke="#000" stroke-width="1.0" fill="none"/>
<path d="M907.5 902.5H962.5V883.5H1020.5" stroke="#000" stroke-width="1.0" fill="none"/>
<path d="M907.5 948.5H1020.5" stroke="#000" stroke-width="1.0" fill="none"/>
<path d="M907.5 995.5H962.5V1014.5H1020.5" stroke="#000" stroke-width="1.0" fill="none"/>
<path d="M533.5 948.5H437.5V1034.5" stroke="#000" stroke-width="1.0" fill="none"/>
<path d="M1207.5 855.5H1423.5" stroke="#000" stroke-width="1.0" fill="none"/>
<path d="M1591.5 855.5H1626.5V986.5H1207.5" stroke="#000" stroke-width="1.0" fill="none"/>
<rect x="613" y="618" width="3" height="5" fill="#fff"/><path d="M551 620.5H626" stroke="#000" stroke-width="1"/>
<rect x="650" y="684" width="3" height="5" fill="#fff"/><path d="M625.5 686.5H687" stroke="#000" stroke-width="1"/>
</svg>
</body></html>
